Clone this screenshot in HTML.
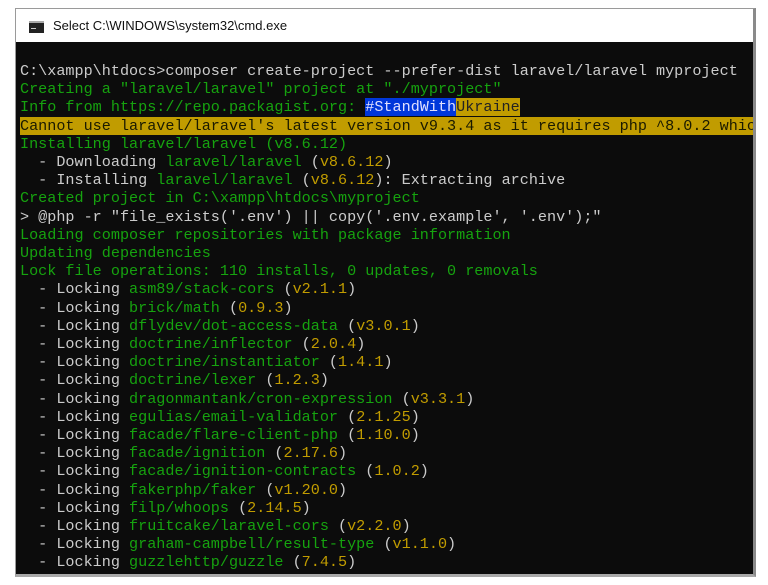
<!DOCTYPE html>
<html><head><meta charset="utf-8"><style>
html,body{margin:0;padding:0;background:#fff;width:768px;height:585px;overflow:hidden}
.win{position:absolute;left:15px;top:8px;width:741px;height:569px;border:1px solid #9a9a9a;border-right:3px solid #8a8a8a;border-bottom:3px solid #a8a8a8;background:#0c0c0c;box-sizing:border-box;overflow:hidden}
.title{position:absolute;left:0;top:0;right:0;height:33px;background:#fff;font-family:"Liberation Sans",sans-serif;font-size:13px;color:#111}
.title span{position:absolute;left:37px;top:9px}
.ico{position:absolute;left:13px;top:12px;width:15px;height:10px;background:#222;border-top:2px solid #aaa}
.ico:after{content:"";position:absolute;left:2px;top:2px;width:5px;height:3px;border-bottom:1px solid #ccc}
pre{position:absolute;left:4px;top:53px;margin:0;font-family:"Liberation Mono",monospace;font-size:15.15px;line-height:18.2px;color:#cccccc;white-space:pre}
.g{color:#16a30f}.y{color:#c19c00}
.hl{background:#c19c00;color:#1a1a00;display:inline-block;width:733px;overflow:hidden;vertical-align:top}
.b{background:#0037da;color:#e0e0ff}.yb{background:#c19c00;color:#222}
</style></head><body>
<div class="win"><div class="title"><div class="ico"></div><span>Select C:\WINDOWS\system32\cmd.exe</span></div>
<pre>C:\xampp\htdocs&gt;composer create-project --prefer-dist laravel/laravel myproject
<span class="g">Creating a "laravel/laravel" project at "./myproject"</span>
<span class="g">Info from https://repo.packagist.org: </span><span class="b">#StandWith</span><span class="yb">Ukraine</span>
<span class="hl">Cannot use laravel/laravel's latest version v9.3.4 as it requires php ^8.0.2 whic</span>
<span class="g">Installing laravel/laravel (v8.6.12)</span>
  - Downloading <span class="g">laravel/laravel</span> (<span class="y">v8.6.12</span>)
  - Installing <span class="g">laravel/laravel</span> (<span class="y">v8.6.12</span>): Extracting archive
<span class="g">Created project in C:\xampp\htdocs\myproject</span>
&gt; @php -r "file_exists('.env') || copy('.env.example', '.env');"
<span class="g">Loading composer repositories with package information</span>
<span class="g">Updating dependencies</span>
<span class="g">Lock file operations: 110 installs, 0 updates, 0 removals</span>
  - Locking <span class="g">asm89/stack-cors</span> (<span class="y">v2.1.1</span>)
  - Locking <span class="g">brick/math</span> (<span class="y">0.9.3</span>)
  - Locking <span class="g">dflydev/dot-access-data</span> (<span class="y">v3.0.1</span>)
  - Locking <span class="g">doctrine/inflector</span> (<span class="y">2.0.4</span>)
  - Locking <span class="g">doctrine/instantiator</span> (<span class="y">1.4.1</span>)
  - Locking <span class="g">doctrine/lexer</span> (<span class="y">1.2.3</span>)
  - Locking <span class="g">dragonmantank/cron-expression</span> (<span class="y">v3.3.1</span>)
  - Locking <span class="g">egulias/email-validator</span> (<span class="y">2.1.25</span>)
  - Locking <span class="g">facade/flare-client-php</span> (<span class="y">1.10.0</span>)
  - Locking <span class="g">facade/ignition</span> (<span class="y">2.17.6</span>)
  - Locking <span class="g">facade/ignition-contracts</span> (<span class="y">1.0.2</span>)
  - Locking <span class="g">fakerphp/faker</span> (<span class="y">v1.20.0</span>)
  - Locking <span class="g">filp/whoops</span> (<span class="y">2.14.5</span>)
  - Locking <span class="g">fruitcake/laravel-cors</span> (<span class="y">v2.2.0</span>)
  - Locking <span class="g">graham-campbell/result-type</span> (<span class="y">v1.1.0</span>)
  - Locking <span class="g">guzzlehttp/guzzle</span> (<span class="y">7.4.5</span>)</pre>
</div>
</body></html>
